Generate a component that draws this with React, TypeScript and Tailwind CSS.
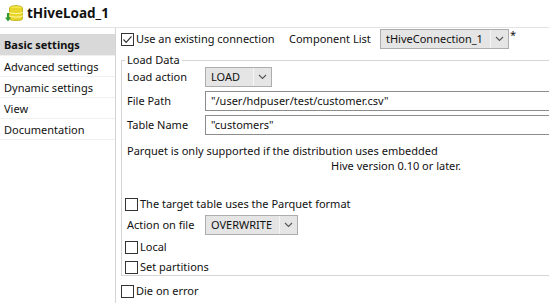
import React from "react";

const Check = ({ checked = false }: { checked?: boolean }) => (
  <span className="w-[13px] h-[13px] border border-[#333] bg-white flex items-center justify-center shrink-0">
    {checked && (
      <svg width="11" height="11" viewBox="0 0 11 11">
        <path d="M1.5 5.5 L4.2 8.3 L9.5 2.3" fill="none" stroke="#333" strokeWidth="1.2" />
      </svg>
    )}
  </span>
);

const Combo = ({ value, width }: { value: string; width: string }) => (
  <div className={`flex h-[20px] border border-[#adadad] bg-[#e5e5e5] shrink-0 ${width}`}>
    <span className="flex-1 pl-[5px] leading-[18px] text-[#111]">{value}</span>
    <span className="w-[18px] border-l border-[#f5f5f5] flex items-center justify-center">
      <svg width="9" height="6" viewBox="0 0 9 6">
        <path d="M1 1 L4.5 4.5 L8 1" fill="none" stroke="#555" strokeWidth="1.1" />
      </svg>
    </span>
  </div>
);

const HiveIcon = () => (
  <svg width="20" height="20" viewBox="0 0 20 20">
    <ellipse cx="12" cy="4" rx="6.5" ry="2.4" fill="#f6e84a" stroke="#b9a90c" strokeWidth="0.8" />
    <path d="M5.5 4 V15 C5.5 17 18.5 17 18.5 15 V4" fill="#e8d52a" stroke="#b9a90c" strokeWidth="0.8" />
    <path d="M5.5 8 C5.5 10 18.5 10 18.5 8" fill="none" stroke="#fff59a" strokeWidth="1.2" />
    <path d="M5.5 11.5 C5.5 13.5 18.5 13.5 18.5 11.5" fill="none" stroke="#fff59a" strokeWidth="1.2" />
    <path d="M4 9 V16" stroke="#2e9d33" strokeWidth="2" />
    <path d="M1 13.5 L4 17.5 L7 13.5 Z" fill="#2e9d33" />
  </svg>
);

export default function App() {
  const tabs = ["Basic settings", "Advanced settings", "Dynamic settings", "View", "Documentation"];
  return (
    <div
      className="w-[549px] h-[303px] bg-white text-[11px] text-[#111] overflow-hidden flex flex-col"
      style={{ fontFamily: '"Noto Sans", "Open Sans", sans-serif' }}
    >
      <div className="h-[28px] shrink-0 flex items-center pl-[4px] gap-[3px] border-b border-[#e3e3e3]">
        <HiveIcon />
        <span className="text-[13.5px] font-bold text-[#111]">tHiveLoad_1</span>
      </div>
      <div className="flex flex-1">
        <div className="w-[116px] border-r border-[#d4d4d4] pt-[6px] shrink-0">
          {tabs.map((t, i) => (
            <div
              key={t}
              className={`pl-[4px] border-b border-[#f0f0f0] ${
                i === 0 ? "bg-[#d9d9d9] font-bold h-[22px] leading-[22px]" : "h-[21px] leading-[21px]"
              }`}
            >
              {t}
            </div>
          ))}
        </div>
        <div className="flex-1 flex flex-col pl-[5px] pt-[1px]">
          <div className="flex items-center h-[20px]">
            <Check checked />
            <span className="ml-[2px] w-[153px]">Use an existing connection</span>
            <span className="w-[91px]">Component List</span>
            <Combo value="tHiveConnection_1" width="w-[129px]" />
            <span className="self-start ml-[1px] -mt-[2px]">*</span>
          </div>
          <div className="relative mt-[11px] border border-[#d5d5d5] border-r-0 pl-[5px] pt-[6px] pb-[1px]">
            <span className="absolute -top-[9px] left-[3px] bg-white px-[2px] leading-[16px]">Load Data</span>
            <div className="flex items-center h-[20px]">
              <span className="w-[78px]">Load action</span>
              <Combo value="LOAD" width="w-[67px]" />
            </div>
            <div className="flex items-center h-[20px] mt-[4px]">
              <span className="w-[78px]">File Path</span>
              <div className="flex-1 h-[20px] border border-r-0 border-[#8c8c8c] pl-[5px] leading-[18px]">
                "/user/hdpuser/test/customer.csv"
              </div>
            </div>
            <div className="flex items-center h-[20px] mt-[4px]">
              <span className="w-[78px]">Table Name</span>
              <div className="flex-1 h-[20px] border border-r-0 border-[#8c8c8c] pl-[5px] leading-[18px]">
                "customers"
              </div>
            </div>
            <div className="mt-[8px] leading-[15px]">Parquet is only supported if the distribution uses embedded</div>
            <div className="leading-[15px] pl-[204px]">Hive version 0.10 or later.</div>
            <div className="flex items-center h-[13px] mt-[25px] -ml-[2px]">
              <Check />
              <span className="ml-[2px]">The target table uses the Parquet format</span>
            </div>
            <div className="flex items-center h-[20px] mt-[4px]">
              <span className="w-[78px]">Action on file</span>
              <Combo value="OVERWRITE" width="w-[93px]" />
            </div>
            <div className="flex items-center h-[13px] mt-[6px] -ml-[2px]">
              <Check />
              <span className="ml-[2px]">Local</span>
            </div>
            <div className="flex items-center h-[13px] mt-[7px] -ml-[2px]">
              <Check />
              <span className="ml-[2px]">Set partitions</span>
            </div>
          </div>
          <div className="flex items-center h-[13px] mt-[9px]">
            <Check />
            <span className="ml-[2px]">Die on error</span>
          </div>
        </div>
      </div>
    </div>
  );
}
